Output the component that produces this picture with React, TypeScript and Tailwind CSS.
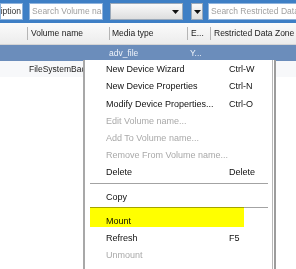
import React from "react";

const font = { fontFamily: '"Liberation Sans", Arial, sans-serif' };

type Item = { label: string; shortcut?: string; disabled?: boolean };

const groupA: Item[] = [
  { label: "New Device Wizard", shortcut: "Ctrl-W" },
  { label: "New Device Properties", shortcut: "Ctrl-N" },
  { label: "Modify Device Properties...", shortcut: "Ctrl-O" },
  { label: "Edit Volume name...", disabled: true },
  { label: "Add To Volume name...", disabled: true },
  { label: "Remove From Volume name...", disabled: true },
  { label: "Delete", shortcut: "Delete" },
];

function Arrow() {
  return (
    <svg width="7" height="4" viewBox="0 0 7 4">
      <path d="M0 0h7L3.5 4z" fill="#111" />
    </svg>
  );
}

function MenuRow({ item }: { item: Item }) {
  return (
    <div
      className={`relative flex h-[17.2px] items-center text-[9px] ${
        item.disabled ? "text-[#a9a9a9]" : "text-[#111]"
      }`}
    >
      <span className="pl-[21px] w-[144px] whitespace-nowrap">{item.label}</span>
      {item.shortcut && <span className="whitespace-nowrap">{item.shortcut}</span>}
    </div>
  );
}

function Separator() {
  return <div className="mt-[1px] mb-[5px] ml-[5px] mr-[4px] h-px bg-[#a3a3a3]" />;
}

function ContextMenu() {
  return (
    <div className="absolute left-[83px] top-[60px] flex h-[220px]">
      <div className="w-[190px] bg-white border-l-2 border-[#a8a8a8] border-r border-r-[#b8b8b8] pt-[1.4px]">
        {groupA.map((it) => (
          <MenuRow key={it.label} item={it} />
        ))}
        <Separator />
        <MenuRow item={{ label: "Copy" }} />
        <Separator />
        <MenuRow item={{ label: "Mount" }} />
        <MenuRow item={{ label: "Refresh", shortcut: "F5" }} />
        <MenuRow item={{ label: "Unmount", disabled: true }} />
      </div>
      <div className="w-[1px] bg-white" />
      <div className="w-[2px] bg-[#9c9c9c]" />
      {/* annotation highlight */}
      <div className="absolute left-[7px] top-[147px] h-[20px] w-[154px] bg-[#ffff00] mix-blend-multiply" />
    </div>
  );
}

export default function App() {
  return (
    <div className="relative w-[296px] h-[269px] overflow-hidden bg-white" style={font}>
      {/* filter strip */}
      <div className="relative h-[23px] bg-[#3e7fc5]">
        <div className="absolute left-0 top-[3px] h-[17px] w-[23px] bg-white border border-[#8fb3dc] overflow-hidden flex items-center justify-end pr-[1px] text-[8.5px] text-[#333]">
          <span className="whitespace-nowrap">ription</span>
        </div>
        <div className="absolute left-[29px] top-[3px] h-[17px] w-[74px] bg-white border border-[#8fb3dc] overflow-hidden flex items-center pl-[2px] text-[8.5px] text-[#a0a0a0]">
          <span className="whitespace-nowrap">Search Volume na</span>
        </div>
        <div className="absolute left-[110px] top-[3px] h-[17px] w-[73px] bg-gradient-to-b from-[#fafafa] to-[#dedede] border border-[#9aa9ba] flex items-center justify-end pr-[3px]">
          <Arrow />
        </div>
        <div className="absolute left-[191px] top-[3px] h-[17px] w-[12px] bg-gradient-to-b from-[#fafafa] to-[#dedede] border border-[#9aa9ba] flex items-center justify-center">
          <Arrow />
        </div>
        <div className="absolute left-[208px] top-[3px] h-[17px] w-[90px] bg-white border border-[#8fb3dc] overflow-hidden flex items-center pl-[2px] text-[8.5px] text-[#a0a0a0]">
          <span className="whitespace-nowrap">Search Restricted Data</span>
        </div>
      </div>

      {/* header */}
      <div className="flex h-[22px] items-center bg-gradient-to-b from-[#fbfbfb] to-[#ececec] border-b border-[#d5d5d5] text-[8.5px] text-[#1a1a1a] whitespace-nowrap">
        <div className="w-[27px]" />
        <div className="w-[82px] border-l border-[#b5b5b5] pl-[3px] h-[13px] flex items-center">Volume name</div>
        <div className="w-[78px] border-l border-[#b5b5b5] pl-[2px] h-[13px] flex items-center">Media type</div>
        <div className="w-[23px] border-l border-[#b5b5b5] pl-[3px] h-[13px] flex items-center">E...</div>
        <div className="flex-1 border-l border-[#b5b5b5] pl-[3px] h-[13px] flex items-center">Restricted Data Zone</div>
      </div>

      {/* selected row */}
      <div className="flex h-[16px] items-center bg-[#6b8dbb] text-[8.5px] text-[#eef3fa] whitespace-nowrap">
        <div className="w-[109px]" />
        <div className="w-[81px]">adv_file</div>
        <div>Y...</div>
      </div>

      {/* row */}
      <div className="flex h-[16px] items-center bg-[#f7f8fa] text-[8.5px] text-[#222] whitespace-nowrap">
        <div className="w-[29px]" />
        <div>FileSystemBackup</div>
      </div>

      <ContextMenu />
    </div>
  );
}
